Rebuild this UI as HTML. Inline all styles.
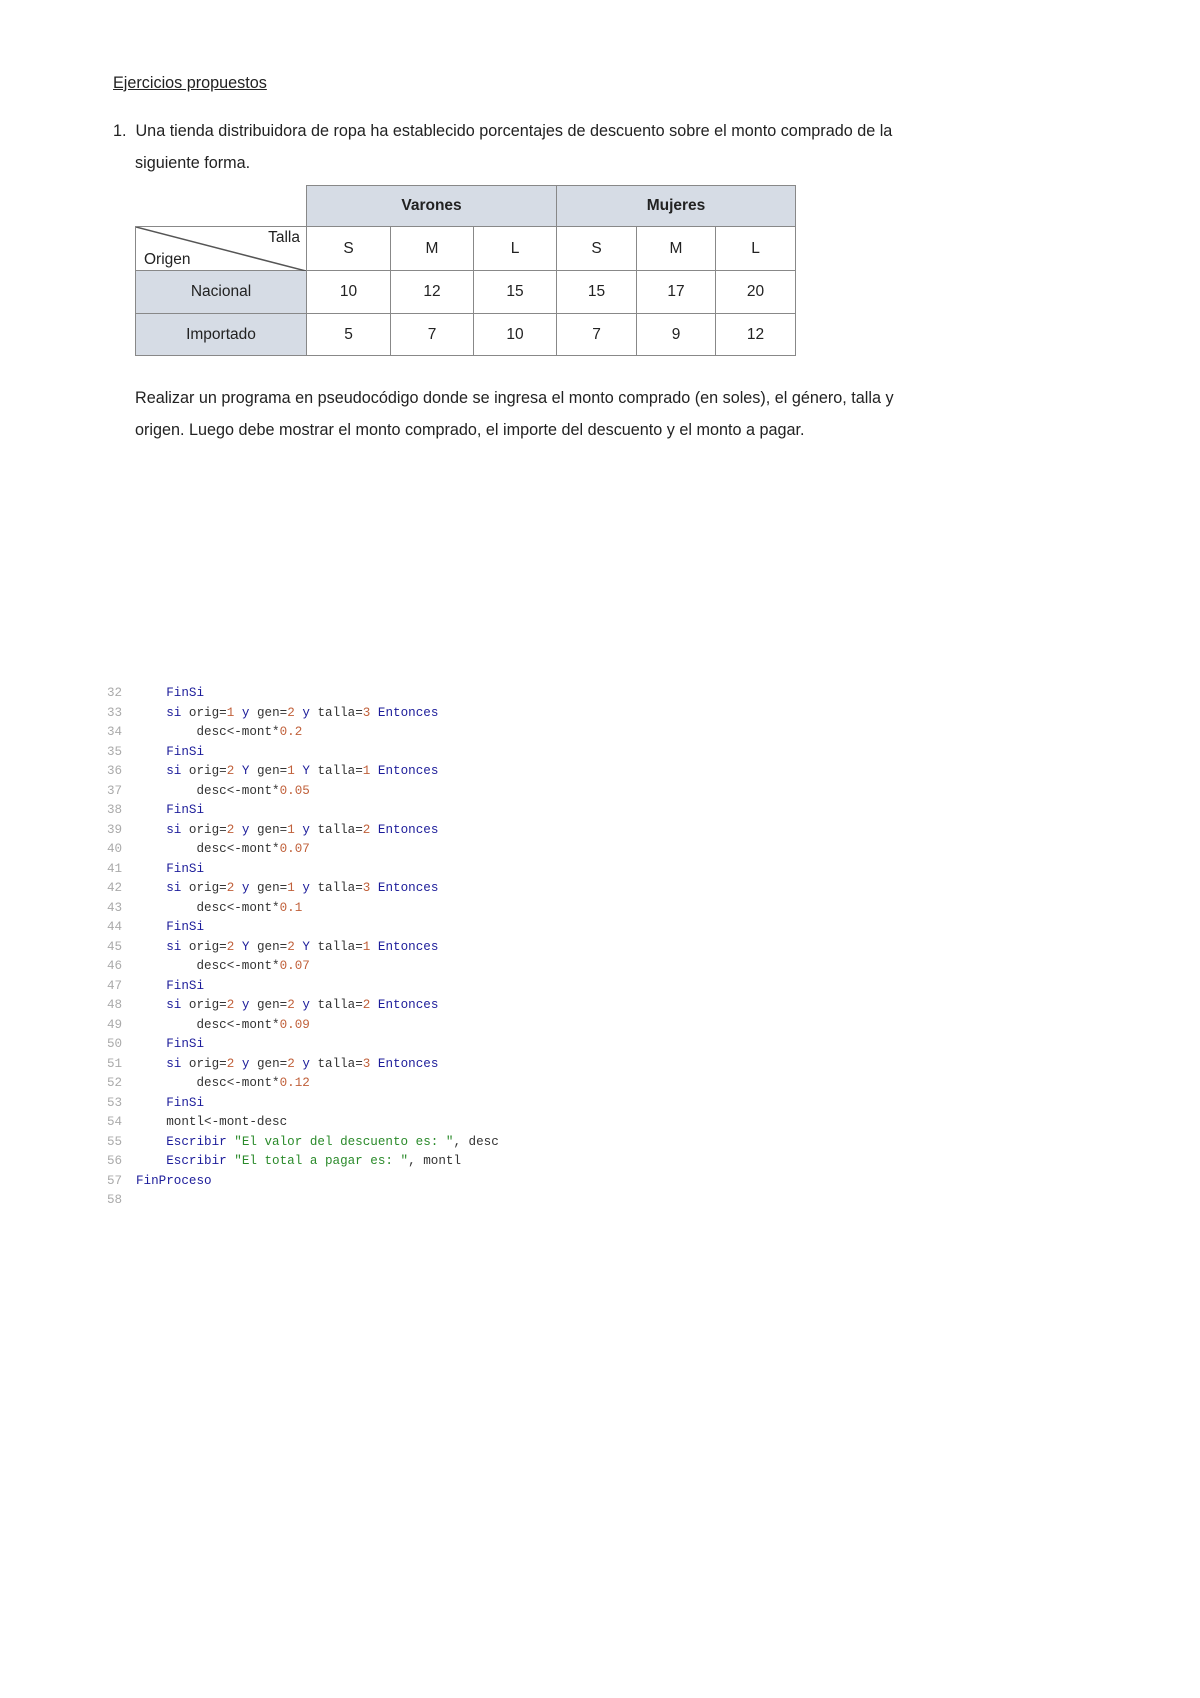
<!DOCTYPE html>
<html><head><meta charset="utf-8"><style>
html,body{margin:0;padding:0;background:#fff;}
body{width:1200px;height:1698px;position:relative;font-family:"Liberation Sans",sans-serif;color:#222;}
.t{position:absolute;font-size:16.2px;white-space:nowrap;}
table{position:absolute;left:135px;top:185px;border-collapse:collapse;font-size:15.5px;}
td{border:1.5px solid #888;text-align:center;padding:0;}
.h{background:#d6dce5;}
.c{position:absolute;font-family:"Liberation Mono",monospace;font-size:12.6px;white-space:pre;line-height:19.5px;}
.n{color:#aaa;left:107px;}
.k{color:#1c1c9a;}
.m{color:#c0603a;}
.s{color:#2a8a2a;}
.p{color:#333;}
</style></head><body>
<div class="t" style="left:113px;top:74px;text-decoration:underline;">Ejercicios propuestos</div>
<div class="t" style="left:113px;top:122px;">1.&nbsp;&nbsp;Una tienda distribuidora de ropa ha establecido porcentajes de descuento sobre el monto comprado de la</div>
<div class="t" style="left:135px;top:154px;">siguiente forma.</div>
<table>
<tr style="height:41px"><td style="border:none;border-bottom:1.5px solid #888;width:170px"></td><td class="h" colspan="3" style="font-weight:bold">Varones</td><td class="h" colspan="3" style="font-weight:bold">Mujeres</td></tr>
<tr style="height:44px"><td style="position:relative;width:170px;">
<svg width="170" height="44" style="position:absolute;left:0;top:0"><line x1="0" y1="0" x2="170" y2="44" stroke="#555" stroke-width="1.5"/></svg>
<span style="position:absolute;right:6px;top:2px">Talla</span><span style="position:absolute;left:8px;bottom:1px">Origen</span></td>
<td style="width:83px">S</td><td style="width:82px">M</td><td style="width:82px">L</td><td style="width:79px">S</td><td style="width:78px">M</td><td style="width:79px">L</td></tr>
<tr style="height:43px"><td class="h">Nacional</td><td>10</td><td>12</td><td>15</td><td>15</td><td>17</td><td>20</td></tr>
<tr style="height:42px"><td class="h">Importado</td><td>5</td><td>7</td><td>10</td><td>7</td><td>9</td><td>12</td></tr>
</table>
<div class="t" style="left:135px;top:389px;">Realizar un programa en pseudocódigo donde se ingresa el monto comprado (en soles), el género, talla y</div>
<div class="t" style="left:135px;top:421px;">origen. Luego debe mostrar el monto comprado, el importe del descuento y el monto a pagar.</div>

<div class="c n" style="top:684px">32
33
34
35
36
37
38
39
40
41
42
43
44
45
46
47
48
49
50
51
52
53
54
55
56
57
58</div>
<div class="c p" style="left:136px;top:684px">    <span class="k">FinSi</span>
    <span class="k">si</span> orig=<span class="m">1</span> <span class="k">y</span> gen=<span class="m">2</span> <span class="k">y</span> talla=<span class="m">3</span> <span class="k">Entonces</span>
        desc&lt;-mont*<span class="m">0.2</span>
    <span class="k">FinSi</span>
    <span class="k">si</span> orig=<span class="m">2</span> <span class="k">Y</span> gen=<span class="m">1</span> <span class="k">Y</span> talla=<span class="m">1</span> <span class="k">Entonces</span>
        desc&lt;-mont*<span class="m">0.05</span>
    <span class="k">FinSi</span>
    <span class="k">si</span> orig=<span class="m">2</span> <span class="k">y</span> gen=<span class="m">1</span> <span class="k">y</span> talla=<span class="m">2</span> <span class="k">Entonces</span>
        desc&lt;-mont*<span class="m">0.07</span>
    <span class="k">FinSi</span>
    <span class="k">si</span> orig=<span class="m">2</span> <span class="k">y</span> gen=<span class="m">1</span> <span class="k">y</span> talla=<span class="m">3</span> <span class="k">Entonces</span>
        desc&lt;-mont*<span class="m">0.1</span>
    <span class="k">FinSi</span>
    <span class="k">si</span> orig=<span class="m">2</span> <span class="k">Y</span> gen=<span class="m">2</span> <span class="k">Y</span> talla=<span class="m">1</span> <span class="k">Entonces</span>
        desc&lt;-mont*<span class="m">0.07</span>
    <span class="k">FinSi</span>
    <span class="k">si</span> orig=<span class="m">2</span> <span class="k">y</span> gen=<span class="m">2</span> <span class="k">y</span> talla=<span class="m">2</span> <span class="k">Entonces</span>
        desc&lt;-mont*<span class="m">0.09</span>
    <span class="k">FinSi</span>
    <span class="k">si</span> orig=<span class="m">2</span> <span class="k">y</span> gen=<span class="m">2</span> <span class="k">y</span> talla=<span class="m">3</span> <span class="k">Entonces</span>
        desc&lt;-mont*<span class="m">0.12</span>
    <span class="k">FinSi</span>
    montl&lt;-mont-desc
    <span class="k">Escribir</span> <span class="s">"El valor del descuento es: "</span>, desc
    <span class="k">Escribir</span> <span class="s">"El total a pagar es: "</span>, montl
<span class="k">FinProceso</span>
</div>
</body></html>
